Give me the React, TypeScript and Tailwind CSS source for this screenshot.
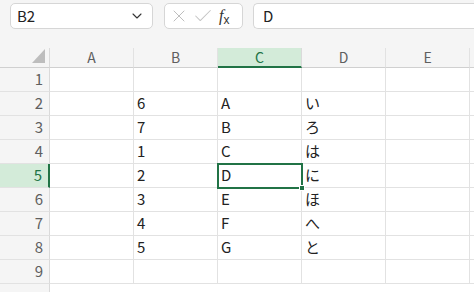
import { ChevronDown, X, Check } from 'lucide-react';

const COLS = ['A', 'B', 'C', 'D', 'E'];
const SEL_COL = 'C';
const SEL_ROW = 5;

// row number -> cell values by column
const DATA: Record<number, Record<string, string>> = {
  2: { B: '6', C: 'A', D: 'い' },
  3: { B: '7', C: 'B', D: 'ろ' },
  4: { B: '1', C: 'C', D: 'は' },
  5: { B: '2', C: 'D', D: 'に' },
  6: { B: '3', C: 'E', D: 'ほ' },
  7: { B: '4', C: 'F', D: 'へ' },
  8: { B: '5', C: 'G', D: 'と' },
};

const ROWS = [1, 2, 3, 4, 5, 6, 7, 8, 9];

function Toolbar() {
  return (
    <div className="flex items-center h-[30px] pt-[2px]">
      <div className="ml-[10px] w-[143px] h-[26px] flex items-center justify-between pl-[6px] pr-[7px] bg-white border border-[#d6d6d6] rounded-[5px]">
        <span className="text-[15px] text-[#222]">B2</span>
        <ChevronDown size={16} strokeWidth={1.6} className="text-[#333]" />
      </div>
      <div className="ml-[11px] w-[79px] h-[26px] flex items-center gap-[3px] pl-[4px] bg-white border border-[#d6d6d6] rounded-[5px]">
        <X size={20} strokeWidth={1.1} className="text-[#b8b8b8]" />
        <Check size={22} strokeWidth={1.1} className="text-[#c4c4c4]" />
        <span className="ml-[2px] text-[16px] italic text-[#333] font-['Liberation_Serif',serif]">
          f<sub className="text-[12px] not-italic font-['Liberation_Sans',sans-serif]">x</sub>
        </span>
      </div>
      <div className="ml-[10px] flex-1 h-[26px] flex items-center pl-[9px] bg-white border border-[#d6d6d6] border-r-0 rounded-l-[5px]">
        <span className="text-[15px] text-[#222]">D</span>
      </div>
    </div>
  );
}

function HeaderRow() {
  return (
    <div className="flex h-[20px] shrink-0">
      <div className="relative w-[50px] shrink-0 border-r border-[#dadada] border-b border-b-[#d0d0d0] bg-[#f5f5f5]">
        <div className="absolute right-[4px] bottom-[4px] w-0 h-0 border-l-[13px] border-l-transparent border-b-[14px] border-b-[#bdbdbd]" />
      </div>
      {COLS.map((c) => {
        const sel = c === SEL_COL;
        return (
          <div
            key={c}
            className={
              sel
                ? 'w-[84px] shrink-0 flex items-center justify-center text-[14px] text-[#217346] bg-[#d3ebd9] border-r border-[#dadada] border-b-2 border-b-[#217346]'
                : 'w-[84px] shrink-0 flex items-center justify-center text-[14px] text-[#5f5f5f] bg-[#f5f5f5] border-r border-[#e2e2e2] border-b border-b-[#d0d0d0]'
            }
          >
            {c}
          </div>
        );
      })}
      <div className="flex-1 bg-[#f5f5f5] border-b border-b-[#d0d0d0]" />
    </div>
  );
}

function Row({ n }: { n: number }) {
  const sel = n === SEL_ROW;
  const vals = DATA[n] ?? {};
  return (
    <div className="flex h-[24px] shrink-0">
      <div
        className={
          sel
            ? 'w-[50px] shrink-0 flex items-center justify-end pr-[6px] text-[15px] text-[#217346] bg-[#d3ebd9] border-r-2 border-[#217346] border-b border-b-[#e2e2e2]'
            : 'w-[50px] shrink-0 flex items-center justify-end pr-[6px] text-[15px] text-[#5f5f5f] bg-[#f5f5f5] border-r border-[#dadada] border-b border-b-[#e2e2e2]'
        }
      >
        {n}
      </div>
      {COLS.map((c) => {
        const active = sel && c === SEL_COL;
        return (
          <div
            key={c}
            className="relative w-[84px] shrink-0 flex items-center pl-[3px] text-[15px] text-[#222] bg-white border-r border-b border-[#e2e2e2]"
          >
            {vals[c]}
            {active && (
              <div className="absolute z-10 -left-px -top-px w-[86px] h-[26px] border-2 border-[#217346]">
                <div className="absolute -right-[4px] -bottom-[4px] w-[6px] h-[6px] bg-[#217346] border border-white" />
              </div>
            )}
          </div>
        );
      })}
      <div className="flex-1 bg-white border-b border-[#e2e2e2]" />
    </div>
  );
}

export default function App() {
  return (
    <div className="w-[474px] h-[292px] overflow-hidden bg-[#f5f5f5] flex flex-col font-['Noto_Sans_CJK_JP','Noto_Sans',sans-serif]">
      <Toolbar />
      <div className="h-[18px] shrink-0" />
      <HeaderRow />
      {ROWS.map((n) => (
        <Row key={n} n={n} />
      ))}
      <div className="flex flex-1">
        <div className="w-[50px] shrink-0 bg-[#f5f5f5] border-r border-[#dadada]" />
        <div className="flex-1 bg-white" />
      </div>
    </div>
  );
}
